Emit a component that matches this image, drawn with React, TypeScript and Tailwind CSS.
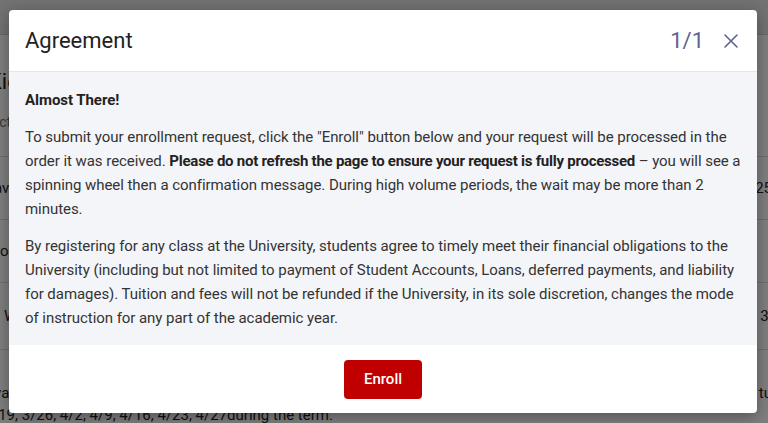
export default function App() {
  const font = { fontFamily: 'Roboto, "Noto Sans", sans-serif' };
  return (
    <div className="relative h-[423px] w-[768px] overflow-hidden bg-white text-[#222]" style={font}>
      {/* page behind the dialog */}
      <div className="flex flex-col">
        <div className="h-[35px] border-b border-[#d0d0d0] bg-[#e4e4e4]"></div>
        <div className="flex h-[122px] flex-col border-b border-[#dddddd] pt-[30px]">
          <div className="-ml-[12px] text-[22px] text-[#222]">Kie</div>
          <div className="-ml-[10px] mt-[14px] text-[14px] text-[#777]">Act</div>
        </div>
        <div className="flex h-[63px] items-center justify-between border-b border-[#dddddd] text-[15px]">
          <span className="-ml-[6px]">av</span>
          <span className="-mr-[4px]">25</span>
        </div>
        <div className="flex h-[63px] items-center border-b border-[#dddddd] text-[15px]">
          <span className="-ml-[5px]">ro</span>
        </div>
        <div className="flex h-[67px] items-center justify-between border-b border-[#dddddd] text-[15px]">
          <span className="-ml-[8px]">n W</span>
          <span className="-mr-[9px]">30</span>
        </div>
        <div className="flex justify-between pt-[32px] text-[15px] leading-[22px]">
          <span className="-ml-[6px]">va</span>
          <span className="-mr-[4px]">tu</span>
        </div>
        <div className="-ml-[8px] text-[15px] leading-[22px]">/19, 3/26, 4/2, 4/9, 4/16, 4/23, 4/27during the term.</div>
      </div>

      {/* backdrop */}
      <div className="absolute inset-0 bg-black/50"></div>

      {/* dialog */}
      <div className="absolute left-[9px] top-[10px] flex w-[748px] flex-col overflow-hidden rounded-[4px] bg-white shadow-[0_4px_16px_rgba(0,0,0,0.35)]">
        <div className="flex h-[62px] items-center justify-between border-b border-[#e3e5ea] pl-[16px] pr-[18px]">
          <h2 className="text-[22px] font-normal text-[#222]">Agreement</h2>
          <div className="flex items-center gap-[19px] text-[#5b6391]">
            <span className="text-[22px]">1/1</span>
            <svg width="16" height="16" viewBox="0 0 16 16" fill="none" stroke="currentColor" strokeWidth="1.6" strokeLinecap="round">
              <path d="M2 2 L14 14 M14 2 L2 14" />
            </svg>
          </div>
        </div>
        <div className="flex flex-col gap-[13px] whitespace-nowrap bg-[#f4f5f9] px-[16px] pb-[15px] pt-[16px] text-[15px] leading-[24px] tracking-[-0.05px] text-[#333]">
          <p className="font-bold text-[#222]">Almost There!</p>
          <p>
            To submit your enrollment request, click the "Enroll" button below and your request will be processed in the
            <br />
            order it was received. <b className="font-bold tracking-[-0.25px] text-[#222]">Please do not refresh the page to ensure your request is fully processed</b> – you will see a
            <br />
            spinning wheel then a confirmation message. During high volume periods, the wait may be more than 2
            <br />
            minutes.
          </p>
          <p>
            By registering for any class at the University, students agree to timely meet their financial obligations to the
            <br />
            University (including but not limited to payment of Student Accounts, Loans, deferred payments, and liability
            <br />
            for damages). Tuition and fees will not be refunded if the University, in its sole discretion, changes the mode
            <br />
            of instruction for any part of the academic year.
          </p>
        </div>
        <div className="flex h-[68px] items-center justify-center">
          <button className="h-[39px] w-[78px] rounded-[4px] bg-[#c00000] text-[15px] font-medium text-white">Enroll</button>
        </div>
      </div>
    </div>
  );
}
